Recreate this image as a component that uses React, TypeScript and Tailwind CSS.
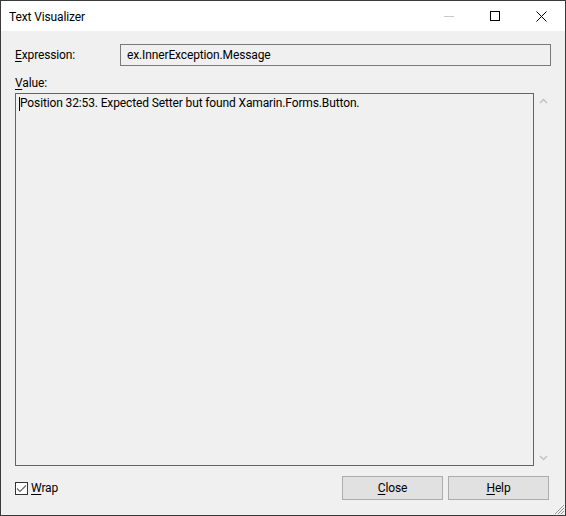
import React from 'react';

const font = { fontFamily: 'Roboto, "Segoe UI", sans-serif' };

// 标题栏按钮
function CaptionButtons() {
  return (
    <div className="flex h-full items-center">
      <div className="flex h-full w-[46px] items-center justify-center">
        <div className="h-px w-[10px] bg-[#c8c8c8]" />
      </div>
      <div className="flex h-full w-[46px] items-center justify-center">
        <div className="h-[10px] w-[10px] border border-black" />
      </div>
      <div className="flex h-full w-[46px] items-center justify-center">
        <svg width="11" height="11" viewBox="0 0 11 11">
          <path d="M0.5 0.5 L10.5 10.5 M10.5 0.5 L0.5 10.5" stroke="#000" strokeWidth="1" />
        </svg>
      </div>
    </div>
  );
}

function Underlined({ ch, rest }: { ch: string; rest: string }) {
  return (
    <span>
      <span className="underline underline-offset-2">{ch}</span>
      {rest}
    </span>
  );
}

export default function App() {
  return (
    <div
      className="flex h-[516px] w-[566px] flex-col border border-[#3a3a3a] bg-[#f0f0f0] text-[12px] tracking-[-0.13px] text-black"
      style={font}
    >
      {/* 标题栏 */}
      <div className="flex h-[30px] items-center justify-between bg-white">
        <span className="pl-[8px] pt-px">Text Visualizer</span>
        <div className="h-full pr-px">
          <CaptionButtons />
        </div>
      </div>

      <div className="flex flex-1 flex-col pl-[14px] pr-[14px]">
        {/* Expression */}
        <div className="mt-[13px] flex h-[22px] items-center">
          <div className="w-[105px]">
            <Underlined ch="E" rest="xpression:" />
          </div>
          <div className="flex h-full flex-1 items-center border border-[#7a7a7a] bg-[#f0f0f0] pl-[6px]">
            ex.InnerException.Message
          </div>
        </div>

        {/* Value */}
        <div className="mt-[9px] h-[16px] leading-[16px]">
          <Underlined ch="V" rest="alue:" />
        </div>
        <div className="mt-[2px] flex h-[373px]">
          <div className="flex-1 border border-[#646464] bg-[#f0f0f0] pl-[4px] pt-[1px] leading-[16px]">
            <span className="relative">
              <span className="absolute -left-px top-[1px] h-[14px] w-px bg-black" />
              Position 32:53. Expected Setter but found Xamarin.Forms.Button.
            </span>
          </div>
          <div className="flex w-[17px] flex-col items-center justify-between py-[5px] pl-[1px]">
            <svg width="9" height="6" viewBox="0 0 9 6">
              <path d="M1 5 L4.5 1.5 L8 5" fill="none" stroke="#c2c2c2" strokeWidth="1.5" />
            </svg>
            <svg width="9" height="6" viewBox="0 0 9 6">
              <path d="M1 1 L4.5 4.5 L8 1" fill="none" stroke="#c2c2c2" strokeWidth="1.5" />
            </svg>
          </div>
        </div>

        {/* 底部 */}
        <div className="mt-[10px] flex h-[24px] items-center justify-between">
          <div className="flex items-center gap-[3px]">
            <div className="flex h-[13px] w-[13px] items-center justify-center border border-[#333] bg-white">
              <svg width="11" height="9" viewBox="0 0 11 9">
                <path d="M1 4.5 L4 7.5 L10 1.5" fill="none" stroke="#666" strokeWidth="1.1" />
              </svg>
            </div>
            <Underlined ch="W" rest="rap" />
          </div>
          <div className="mr-[2px] flex gap-[5px]">
            <button className="h-[24px] w-[101px] border border-[#adadad] bg-[#e1e1e1]">
              <Underlined ch="C" rest="lose" />
            </button>
            <button className="h-[24px] w-[101px] border border-[#adadad] bg-[#e1e1e1]">
              <Underlined ch="H" rest="elp" />
            </button>
          </div>
        </div>

        <div className="flex flex-1 items-end justify-end -mr-[14px]">
          <svg width="12" height="12" viewBox="0 0 12 12">
            <path d="M11 2 L2 11 M11 5 L5 11 M11 8 L8 11" stroke="#9a9a9a" strokeWidth="1" />
          </svg>
        </div>
      </div>
    </div>
  );
}
